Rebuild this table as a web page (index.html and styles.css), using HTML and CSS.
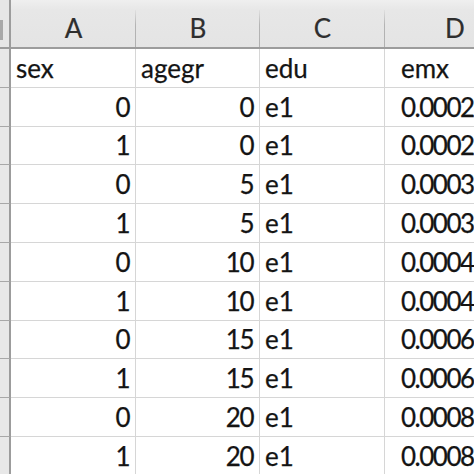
FILE: index.html
```html
<!DOCTYPE html>
<html>
<head>
<meta charset="utf-8">
<link rel="stylesheet" href="styles.css">
</head>
<body>
<div class="sheet">
  <div class="corner"><span class="tri"></span></div>
  <div class="colhead">A</div>
  <div class="colhead">B</div>
  <div class="colhead">C</div>
  <div class="colhead last">D</div>

  <div class="rowhead"></div><div class="cell">sex</div><div class="cell">agegr</div><div class="cell">edu</div><div class="cell d">emx</div>
  <div class="rowhead"></div><div class="cell num">0</div><div class="cell num">0</div><div class="cell">e1</div><div class="cell d n">0.0002</div>
  <div class="rowhead"></div><div class="cell num">1</div><div class="cell num">0</div><div class="cell">e1</div><div class="cell d n">0.0002</div>
  <div class="rowhead"></div><div class="cell num">0</div><div class="cell num">5</div><div class="cell">e1</div><div class="cell d n">0.0003</div>
  <div class="rowhead"></div><div class="cell num">1</div><div class="cell num">5</div><div class="cell">e1</div><div class="cell d n">0.0003</div>
  <div class="rowhead"></div><div class="cell num">0</div><div class="cell num">10</div><div class="cell">e1</div><div class="cell d n">0.0004</div>
  <div class="rowhead"></div><div class="cell num">1</div><div class="cell num">10</div><div class="cell">e1</div><div class="cell d n">0.0004</div>
  <div class="rowhead"></div><div class="cell num">0</div><div class="cell num">15</div><div class="cell">e1</div><div class="cell d n">0.0006</div>
  <div class="rowhead"></div><div class="cell num">1</div><div class="cell num">15</div><div class="cell">e1</div><div class="cell d n">0.0006</div>
  <div class="rowhead"></div><div class="cell num">0</div><div class="cell num">20</div><div class="cell">e1</div><div class="cell d n">0.0008</div>
  <div class="rowhead"></div><div class="cell num">1</div><div class="cell num">20</div><div class="cell">e1</div><div class="cell d n">0.0008</div>
</div>
</body>
</html>
```

FILE: styles.css
```css
html, body {
  margin: 0;
  padding: 0;
  background: #ffffff;
  overflow: hidden;
}
.sheet {
  display: grid;
  grid-template-columns: 11px 125px 124px 125px 140px;
  grid-template-rows: 49px repeat(11, 38.8px);
  width: 525px;
  font-family: Lato, "Open Sans", sans-serif;
  font-size: 26px;
  color: #141414;
  -webkit-text-stroke: 0.25px #141414;
}
.corner {
  background: #e6e6e6;
  border-right: 2px solid #9c9c9c;
  border-bottom: 2px solid #9c9c9c;
  box-sizing: border-box;
  position: relative;
}
.tri {
  position: absolute;
  left: 0;
  top: 20px;
  width: 3px;
  height: 20px;
  background: #a8a8a8;
}
.colhead {
  background: linear-gradient(#efefef 0, #e7e7e7 10px, #e4e4e4 100%);
  border-bottom: 2px solid #9c9c9c;
  box-sizing: border-box;
  display: flex;
  align-items: flex-end;
  justify-content: center;
  padding-bottom: 3px;
  color: #2e2e2e;
  -webkit-text-stroke: 0.2px #2e2e2e;
  position: relative;
}
.colhead::after {
  content: "";
  position: absolute;
  right: 0;
  top: 10px;
  bottom: 0;
  width: 1px;
  background: linear-gradient(#e0e0e0, #b4b4b4 40%, #b0b0b0);
}
.colhead.last::after { display: none; }
.rowhead {
  background: #e8e8e8;
  border-right: 2px solid #9c9c9c;
  border-bottom: 1px solid #a8a8a8;
  box-sizing: border-box;
}
.cell {
  border-right: 1px solid #d6d6d6;
  border-bottom: 1px solid #d6d6d6;
  box-sizing: border-box;
  display: flex;
  align-items: flex-end;
  padding: 0 5px 3px 5px;
  white-space: nowrap;
  overflow: hidden;
}
.cell.num {
  justify-content: flex-end;
  letter-spacing: -1.5px;
  padding-right: 6px;
}
.cell.d {
  padding-left: 16px;
  border-right: none;
}
.cell.n {
  letter-spacing: -1.5px;
}
```
